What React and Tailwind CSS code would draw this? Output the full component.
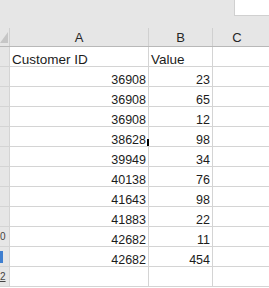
import React from 'react'

const rows = [
  ['Customer ID', 'Value'],
  [36908, 23],
  [36908, 65],
  [36908, 12],
  [38628, 98],
  [39949, 34],
  [40138, 76],
  [41643, 98],
  [41883, 22],
  [42682, 11],
  [42682, 454],
  ['', ''],
]

function RowHead({ i }) {
  const base = 'w-[10px] shrink-0 border-r border-b border-[#d4d4d4] bg-[#e6e6e6] flex items-center'
  if (i === 9) {
    return <div className={base}><span className="text-[10px] leading-none text-[#444]">0</span></div>
  }
  if (i === 10) {
    return <div className={base}><div className="w-[3px] h-[12px] bg-[#3f7fd0]" /></div>
  }
  if (i === 11) {
    return <div className={base}><span className="text-[10px] leading-none text-[#444] underline">2</span></div>
  }
  return <div className={base} />
}

export default function App() {
  return (
    <div className="w-[269px] h-[288px] overflow-hidden bg-white text-[#1c1c1c]" style={{ fontFamily: '"Liberation Sans", Arial, sans-serif' }}>
      {/* top band */}
      <div className="h-[28px] bg-[#e6e6e6] flex justify-end">
        <div className="w-[35px] h-[16px] bg-white border-l border-b border-[#d0d0d0]" />
      </div>

      {/* column headers */}
      <div className="flex h-[19px] bg-[#e6e6e6] border-b border-[#b8b8b8] text-[13px] leading-none text-[#262626]">
        <div className="w-[10px] shrink-0 border-r border-[#d0d0d0] relative">
          <div className="absolute left-0 bottom-[3px] w-0 h-0 border-l-[8px] border-l-transparent border-b-[11px] border-b-[#c6c6c6]" />
        </div>
        <div className="w-[139px] shrink-0 border-r border-[#d0d0d0] flex items-end justify-center pb-[2px]">A</div>
        <div className="w-[64px] shrink-0 border-r border-[#d0d0d0] flex items-end justify-center pb-[2px]">B</div>
        <div className="flex-1 flex items-end justify-center pb-[2px] pr-[8px]">C</div>
      </div>

      {rows.map((r, i) => {
        const head = i === 0
        const txt = head ? 'text-[13.5px] justify-start pl-[2px]' : 'text-[12.5px] justify-end pr-[2px]'
        return (
          <div key={i} className="flex h-[20px] leading-none">
            <RowHead i={i} />
            <div className={`w-[139px] shrink-0 border-r border-b border-[#d4d4d4] flex items-end relative ${txt}`}>
              {r[0]}
              {i === 4 && <div className="absolute right-[-1px] top-[12px] w-[2px] h-[7px] bg-black" />}
            </div>
            <div className={`w-[64px] shrink-0 border-r border-b border-[#d4d4d4] flex items-end ${txt}`}>
              {r[1]}
            </div>
            <div className="flex-1 border-b border-[#d4d4d4]" />
          </div>
        )
      })}
    </div>
  )
}
